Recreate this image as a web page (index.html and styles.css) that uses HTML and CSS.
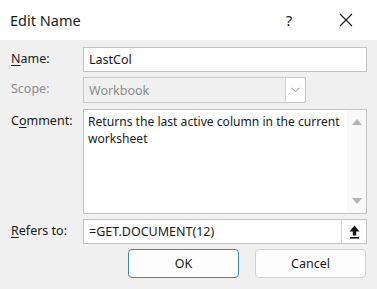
FILE: index.html
```html
<!DOCTYPE html>
<html lang="en">
<head>
  <meta charset="UTF-8" />
  <title>Edit Name</title>
  <link rel="stylesheet" href="styles.css">
</head>
<body>
  <div class="dialog">
    <div class="titlebar">
      <span class="title">Edit Name</span>
      <span class="help">?</span>
      <span class="close">
        <svg width="14" height="14" viewBox="0 0 14 14"><path d="M1 1L13 13M13 1L1 13" stroke="#222" stroke-width="1.2" fill="none"/></svg>
      </span>
    </div>

    <div class="content">
      <div class="row row-name">
        <label class="label"><u>N</u>ame:</label>
        <div class="field">LastCol</div>
      </div>

      <div class="row row-scope">
        <label class="label disabled">Scope:</label>
        <div class="select">
          <span class="select-value">Workbook</span>
          <span class="select-button">
            <svg width="9" height="6" viewBox="0 0 9 6"><path d="M0.5 0.8L4.5 4.8L8.5 0.8" stroke="#888" stroke-width="1" fill="none"/></svg>
          </span>
        </div>
      </div>

      <div class="row row-comment">
        <label class="label">C<u>o</u>mment:</label>
        <div class="textarea">
          <div class="textarea-text">Returns the last active column in the current worksheet</div>
          <div class="scrollbar">
            <svg width="10" height="6" viewBox="0 0 10 6"><path d="M0 6L5 0L10 6Z" fill="#b4b4b4"/></svg>
            <svg width="10" height="6" viewBox="0 0 10 6"><path d="M0 0L10 0L5 6Z" fill="#b4b4b4"/></svg>
          </div>
        </div>
      </div>

      <div class="row row-refers">
        <label class="label"><u>R</u>efers to:</label>
        <div class="field field-refers">
          <span>=GET.DOCUMENT(12)</span>
          <span class="collapse-button">
            <svg width="11" height="14" viewBox="0 0 11 14"><path d="M5.5 0.5L10.5 6.5L7.2 6.5L7.2 10.5L3.8 10.5L3.8 6.5L0.5 6.5Z" fill="#111"/><rect x="1" y="12" width="9" height="1.6" fill="#111"/></svg>
          </span>
        </div>
      </div>

      <div class="buttons">
        <button class="btn btn-default">OK</button>
        <button class="btn">Cancel</button>
      </div>
    </div>
  </div>
</body>
</html>
```

FILE: styles.css
```css
* {
  margin: 0;
  padding: 0;
  box-sizing: border-box;
}

body {
  width: 377px;
  height: 289px;
  overflow: hidden;
  background: #f0f0f0;
  font-family: 'Noto Sans', 'Open Sans', 'Segoe UI', sans-serif;
  font-size: 12.5px;
  color: #1a1a1a;
}

.dialog {
  width: 377px;
  height: 289px;
  display: flex;
  flex-direction: column;
}

.titlebar {
  height: 40px;
  background: #ffffff;
  display: flex;
  align-items: center;
  padding-left: 10px;
}

.title {
  font-size: 14.5px;
  color: #1a1a1a;
  flex: 1;
}

.help {
  font-size: 15px;
  width: 16px;
  text-align: center;
  margin-right: 42px;
  color: #222;
}

.close {
  display: flex;
  margin-right: 24px;
}

.content {
  flex: 1;
  background: #f0f0f0;
  padding: 7px 10px 0 11px;
  display: flex;
  flex-direction: column;
}

.row {
  display: flex;
  align-items: flex-start;
}

.label {
  width: 72px;
  padding-top: 3px;
  line-height: 17px;
}

.label.disabled {
  color: #8c8c8c;
}

.label u {
  text-underline-offset: 2px;
}

.field {
  flex: 1;
  height: 25px;
  background: #ffffff;
  border: 1px solid #c2c2c2;
  padding: 0 5px;
  display: flex;
  align-items: center;
}

.row-scope {
  margin-top: 5px;
}

.select {
  width: 223px;
  height: 26px;
  background: #f0f0f0;
  border: 1px solid #c8c8c8;
  display: flex;
  align-items: center;
  color: #8c8c8c;
}

.select-value {
  flex: 1;
  padding-left: 5px;
}

.select-button {
  width: 20px;
  height: 24px;
  background: #ffffff;
  border-left: 1px solid #d4d4d4;
  display: flex;
  align-items: center;
  justify-content: center;
}

.row-comment {
  margin-top: 6px;
}

.textarea {
  flex: 1;
  height: 105px;
  background: #ffffff;
  border: 1px solid #c2c2c2;
  display: flex;
}

.textarea-text {
  flex: 1;
  padding: 3px 0 0 4px;
  font-size: 12.1px;
  line-height: 17px;
}

.scrollbar {
  width: 19px;
  display: flex;
  flex-direction: column;
  justify-content: space-between;
  align-items: center;
  padding: 9px 0 9px;
  background: #f9f9f9;
}

.row-refers {
  margin-top: 5px;
}

.field-refers {
  justify-content: space-between;
  padding-right: 0;
}

.collapse-button {
  width: 25px;
  height: 23px;
  border-left: 1px solid #d8d8d8;
  display: flex;
  align-items: center;
  justify-content: center;
}

.buttons {
  margin-top: 5px;
  display: flex;
  justify-content: flex-end;
  gap: 16px;
  padding-right: 1px;
}

.btn {
  width: 111px;
  height: 29px;
  background: #fdfdfd;
  border: 1px solid #d0d0d0;
  border-radius: 4px;
  font-family: inherit;
  font-size: 12.5px;
  color: #1a1a1a;
}

.btn-default {
  border: 1px solid #3f86ad;
  box-shadow: inset 0 0 0 1px #ffffff;
}
```
